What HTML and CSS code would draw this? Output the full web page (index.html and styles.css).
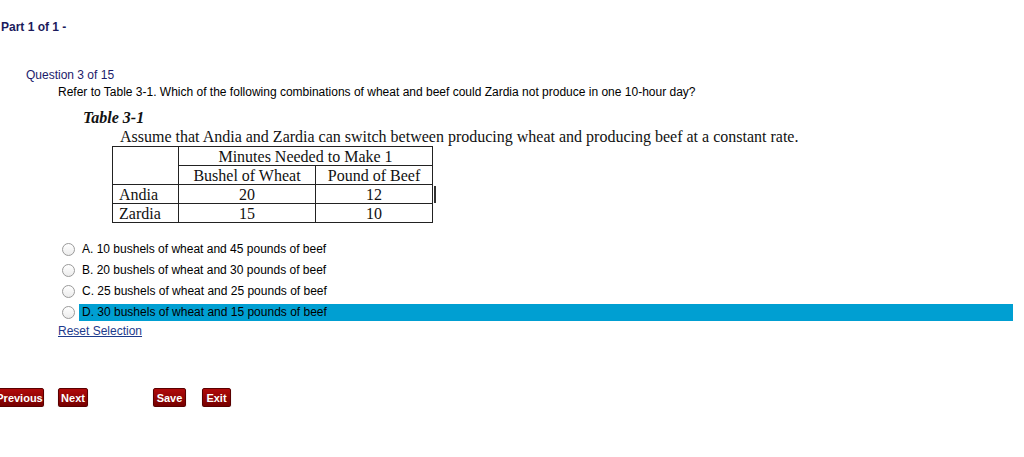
FILE: index.html
```html
<!DOCTYPE html>
<html>
<head>
<meta charset="utf-8">
<link rel="stylesheet" href="styles.css">
</head>
<body>
<div class="part">Part 1 of 1 -</div>
<div class="question">Question 3 of 15</div>
<div class="prompt">Refer to Table 3-1. Which of the following combinations of wheat and beef could Zardia not produce in one 10-hour day?</div>
<div class="table-title">Table 3-1</div>
<div class="assume">Assume that Andia and Zardia can switch between producing wheat and producing beef at a constant rate.</div>
<div class="table-wrap">
  <table class="data">
    <tr><td class="c1" rowspan="2"></td><td colspan="2" class="head">Minutes Needed to Make 1</td></tr>
    <tr><td class="c2">Bushel of Wheat</td><td class="c3">Pound of Beef</td></tr>
    <tr><td class="name">Andia</td><td>20</td><td>12</td></tr>
    <tr><td class="name">Zardia</td><td>15</td><td>10</td></tr>
  </table>
  <div class="caret"></div>
</div>
<div class="options">
  <div class="opt"><span class="radio"></span><span class="label">A. 10 bushels of wheat and 45 pounds of beef</span></div>
  <div class="opt"><span class="radio"></span><span class="label">B. 20 bushels of wheat and 30 pounds of beef</span></div>
  <div class="opt"><span class="radio"></span><span class="label">C. 25 bushels of wheat and 25 pounds of beef</span></div>
  <div class="opt"><span class="radio"></span><span class="label selected">D. 30 bushels of wheat and 15 pounds of beef</span></div>
</div>
<div class="reset"><a href="#">Reset Selection</a></div>
<div class="buttons">
  <span class="btn prev">Previous</span>
  <span class="btn next">Next</span>
  <span class="btn save">Save</span>
  <span class="btn exit">Exit</span>
</div>
</body>
</html>
```
FILE: styles.css
```css
html, body {
  margin: 0;
  padding: 0;
  background: #ffffff;
  font-family: "Liberation Sans", Arial, sans-serif;
  font-size: 12px;
  color: #000;
  overflow: hidden;
}
.part {
  margin-top: 20px;
  line-height: 14px;
  font-weight: bold;
  color: #1b1b5c;
  padding-left: 1px;
}
.question {
  margin-top: 34px;
  line-height: 14px;
  padding-left: 26px;
  color: #1b1b6b;
}
.prompt {
  line-height: 14px;
  padding-left: 58px;
  margin-top: 3px;
}
.table-title {
  margin-top: 9px;
  margin-left: 83px;
  line-height: 19px;
  font-family: "Liberation Serif", "Times New Roman", serif;
  font-style: italic;
  font-weight: bold;
  font-size: 16px;
  color: #111;
}
.assume {
  margin-left: 120px;
  margin-top: 0;
  line-height: 19px;
  font-family: "Liberation Serif", "Times New Roman", serif;
  font-size: 16px;
  color: #111;
}
.table-wrap {
  display: flex;
  margin-left: 112px;
}
.data {
  border-collapse: collapse;
  width: 321px;
  font-family: "Liberation Serif", "Times New Roman", serif;
  font-size: 16px;
  color: #111;
}
.data td {
  border: 1px solid #222;
  height: 18px;
  padding: 0;
  text-align: center;
  line-height: 17px;
}
.data td.name {
  text-align: left;
  padding-left: 6px;
}
.data .c1 { width: 65px; }
.data .c2 { width: 136px; }
.caret {
  width: 2px;
  height: 17px;
  background: #333;
  margin-top: 40px;
  margin-left: 1px;
}
.options {
  margin-top: 16px;
}
.opt {
  display: flex;
  align-items: center;
  height: 21px;
}
.radio {
  width: 11px;
  height: 11px;
  border: 1px solid #9a9a9a;
  border-radius: 50%;
  background: linear-gradient(#ffffff, #ececec);
  margin-left: 62px;
  flex: none;
}
.label {
  margin-left: 4px;
  padding-left: 3px;
  line-height: 17px;
  height: 17px;
}
.label.selected {
  background: #009fd2;
  width: 931px;
}
.reset {
  padding-left: 58px;
  line-height: 14px;
  margin-top: 1px;
}
.reset a {
  color: #1c3a8c;
  text-decoration: underline;
}
.buttons {
  display: flex;
  margin-top: 50px;
  margin-left: -5px;
}
.btn {
  display: block;
  height: 19px;
  line-height: 18px;
  box-sizing: border-box;
  text-align: center;
  color: #fff;
  font-weight: bold;
  font-size: 11px;
  border-radius: 2px;
  background: linear-gradient(#b00a0a, #760000);
  border: 1px solid #5a0000;
  box-shadow: 0 1px 1px rgba(0,0,0,0.35);
}
.prev { width: 49px; }
.next { width: 30px; margin-left: 14px; }
.save { width: 33px; margin-left: 65px; }
.exit { width: 29px; margin-left: 16px; }
```
